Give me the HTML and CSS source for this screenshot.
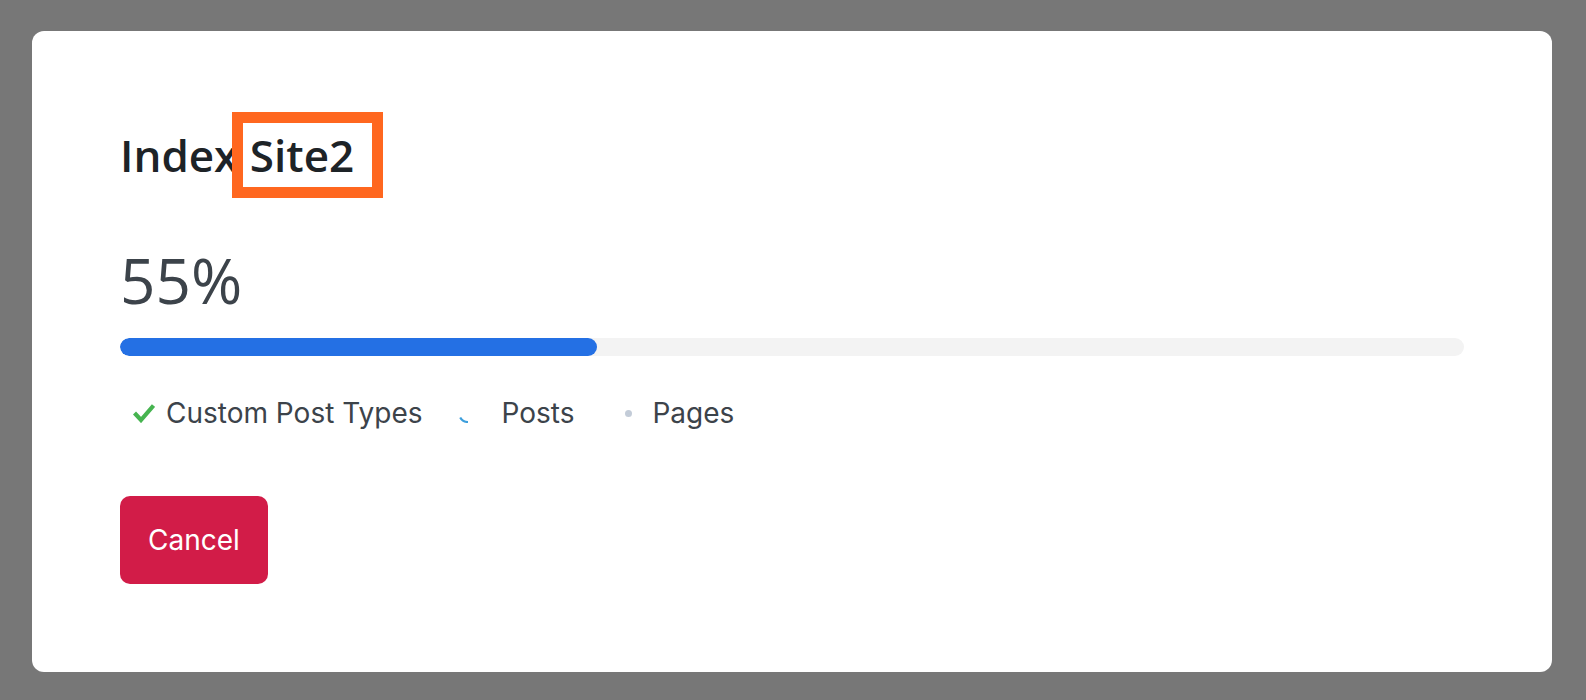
FILE: index.html
```html
<!DOCTYPE html>
<html lang="en">
<head>
<meta charset="utf-8">
<title>Index Site2</title>
<link rel="stylesheet" href="styles.css">
</head>
<body>
<div class="modal">
  <h1 class="title">Index <span class="site">Site2</span></h1>
  <div class="highlight"></div>
  <div class="percent">55%</div>
  <div class="bar"><div class="bar-fill" style="width: 477px"></div></div>
  <ul class="steps">
    <li class="step step-done">
      <svg class="icon-check" width="22" height="19" viewBox="0 0 22 19" aria-hidden="true">
        <polyline points="1.5,9 8,16 20.5,1.5" fill="none" stroke="#46b450" stroke-width="4.2" stroke-linejoin="miter"/>
      </svg>
      <span class="step-label">Custom Post Types</span>
    </li>
    <li class="step step-active">
      <svg class="icon-spinner" width="20" height="20" viewBox="0 0 20 20" aria-hidden="true">
        <path d="M 10 19 A 9 9 0 0 1 2.2 14.5" fill="none" stroke="#3d9fdc" stroke-width="2.2"/>
      </svg>
      <span class="step-label">Posts</span>
    </li>
    <li class="step step-pending">
      <span class="icon-dot"></span>
      <span class="step-label">Pages</span>
    </li>
  </ul>
  <button class="btn-cancel" type="button">Cancel</button>
</div>
</body>
</html>
```
FILE: styles.css
```css
html, body {
  margin: 0;
  padding: 0;
}
body {
  background: #777777;
  width: 1586px;
  height: 700px;
  overflow: hidden;
  padding-top: 31px;
  box-sizing: border-box;
}
.modal {
  position: relative;
  margin-left: 32px;
  width: 1520px;
  height: 641px;
  box-sizing: border-box;
  background: #ffffff;
  border-radius: 12px;
  padding: 97px 88px 0 88px;
}
.title {
  margin: 0;
  font-family: "Open Sans", "Noto Sans", sans-serif;
  font-weight: 600;
  font-size: 44px;
  line-height: 54px;
  color: #1d2327;
}
.highlight {
  position: absolute;
  left: 200px;
  top: 81px;
  width: 151px;
  height: 86px;
  box-sizing: border-box;
  border: 11px solid #ff671f;
  pointer-events: none;
}
.percent {
  margin-top: 60px;
  font-family: "Open Sans", "Noto Sans", sans-serif;
  font-weight: 400;
  font-size: 62px;
  line-height: 76px;
  color: #3c434a;
}
.bar {
  margin-top: 20px;
  height: 18px;
  border-radius: 9px;
  background: #f3f3f3;
  overflow: hidden;
}
.bar-fill {
  height: 100%;
  border-radius: 9px;
  background: #2470e4;
}
.steps {
  list-style: none;
  margin: 40px 0 0 0;
  padding: 0 0 0 13px;
  display: flex;
  align-items: center;
  font-family: "Inter", "Liberation Sans", sans-serif;
  font-size: 28px;
  line-height: 34px;
  color: #3c434a;
}
.step {
  display: flex;
  align-items: center;
}
.icon-check {
  display: block;
  margin-right: 11px;
}
.step-active {
  margin-left: 35px;
}
.icon-spinner {
  display: block;
  margin-right: 24px;
}
.step-pending {
  margin-left: 51px;
}
.icon-dot {
  display: block;
  width: 7px;
  height: 7px;
  border-radius: 50%;
  background: #c3ccd8;
  margin-right: 20px;
}
.btn-cancel {
  display: block;
  margin-top: 66px;
  height: 88px;
  padding: 0 28px;
  border: 0;
  border-radius: 10px;
  background: #d21c48;
  color: #ffffff;
  font-family: "Inter", "Liberation Sans", sans-serif;
  font-size: 28px;
  line-height: 30px;
  cursor: pointer;
}
```
